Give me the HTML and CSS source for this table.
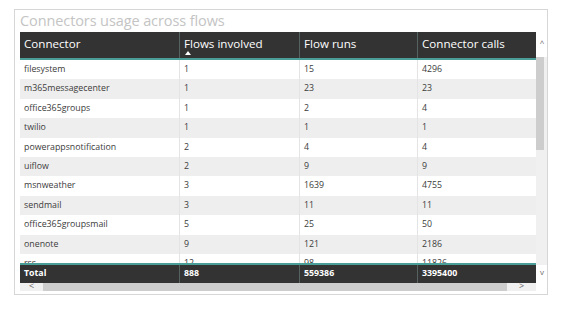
FILE: index.html
```html
<!DOCTYPE html>
<html>
<head>
<meta charset="utf-8">
<link rel="stylesheet" href="styles.css">
</head>
<body>
<div class="visual">
  <div class="title">Connectors usage across flows</div>
  <div class="frame">
    <div class="main">
      <div class="table">
        <div class="row head">
          <div class="cell">Connector</div>
          <div class="cell sorted">Flows involved<span class="sort"></span></div>
          <div class="cell">Flow runs</div>
          <div class="cell">Connector calls</div>
        </div>
        <div class="body">
          <div class="row"><div class="cell">filesystem</div><div class="cell">1</div><div class="cell">15</div><div class="cell">4296</div></div>
          <div class="row alt"><div class="cell">m365messagecenter</div><div class="cell">1</div><div class="cell">23</div><div class="cell">23</div></div>
          <div class="row"><div class="cell">office365groups</div><div class="cell">1</div><div class="cell">2</div><div class="cell">4</div></div>
          <div class="row alt"><div class="cell">twilio</div><div class="cell">1</div><div class="cell">1</div><div class="cell">1</div></div>
          <div class="row"><div class="cell">powerappsnotification</div><div class="cell">2</div><div class="cell">4</div><div class="cell">4</div></div>
          <div class="row alt"><div class="cell">uiflow</div><div class="cell">2</div><div class="cell">9</div><div class="cell">9</div></div>
          <div class="row"><div class="cell">msnweather</div><div class="cell">3</div><div class="cell">1639</div><div class="cell">4755</div></div>
          <div class="row alt"><div class="cell">sendmail</div><div class="cell">3</div><div class="cell">11</div><div class="cell">11</div></div>
          <div class="row"><div class="cell">office365groupsmail</div><div class="cell">5</div><div class="cell">25</div><div class="cell">50</div></div>
          <div class="row alt"><div class="cell">onenote</div><div class="cell">9</div><div class="cell">121</div><div class="cell">2186</div></div>
          <div class="row"><div class="cell">rss</div><div class="cell">12</div><div class="cell">98</div><div class="cell">11826</div></div>
        </div>
        <div class="row total">
          <div class="cell">Total</div>
          <div class="cell">888</div>
          <div class="cell">559386</div>
          <div class="cell">3395400</div>
        </div>
      </div>
      <div class="vscroll">
        <div class="arrow up">^</div>
        <div class="vtrack"><div class="vthumb"></div></div>
        <div class="arrow down">v</div>
      </div>
    </div>
    <div class="hscroll">
      <div class="harrow">&lt;</div>
      <div class="hthumb"></div>
      <div class="harrow right">&gt;</div>
      <div class="corner"></div>
    </div>
  </div>
</div>
</body>
</html>
```
FILE: styles.css
```css
* { box-sizing: border-box; }
html, body { margin: 0; padding: 0; background: #ffffff; }
body {
  font-family: "Open Sans", "Noto Sans", "Liberation Sans", sans-serif;
  width: 565px;
  height: 311px;
  padding: 9px 0 0 14px;
}
.visual {
  width: 534px;
  height: 286px;
  border: 1px solid #d6d6d6;
  padding: 0 0 0 5px;
  display: flex;
  flex-direction: column;
}
.title {
  height: 22px;
  line-height: 21px;
  font-size: 14.5px;
  color: #c4c4c4;
  letter-spacing: -0.1px;
  white-space: nowrap;
}
.frame {
  display: flex;
  flex-direction: column;
  width: 527px;
}
.main {
  display: flex;
}
.table {
  width: 516px;
  display: flex;
  flex-direction: column;
}
.row {
  display: grid;
  grid-template-columns: 159px 120px 118px 119px;
  height: 19.4px;
  background: #ffffff;
}
.row.alt { background: #eeeeee; }
.cell {
  padding-left: 4px;
  font-size: 8.8px;
  line-height: 19.4px;
  color: #3c3c3c;
  white-space: nowrap;
  overflow: hidden;
  border-left: 1px solid #e4e4e4;
}
.cell:first-child { border-left: none; padding-left: 4px; }
.head {
  height: 28px;
  background: #333333;
  border-bottom: 2px solid #4a9e98;
}
.head .cell {
  color: #ffffff;
  font-size: 11.6px;
  line-height: 16px;
  padding-top: 4px;
  border-left: 1px solid #56625f;
  position: relative;
}
.head .cell:first-child { border-left: none; }
.sort {
  position: absolute;
  left: 5px;
  top: 19px;
  width: 0;
  height: 0;
  border-left: 3.5px solid transparent;
  border-right: 3.5px solid transparent;
  border-bottom: 4px solid #ffffff;
}
.body {
  height: 203px;
  overflow: hidden;
}
.total {
  height: 20px;
  background: #333333;
  border-top: 2px solid #4a9e98;
}
.total .cell {
  color: #ffffff;
  font-weight: 700;
  font-size: 8.8px;
  line-height: 17px;
  border-left: 1px solid #56625f;
}
.total .cell:first-child { border-left: none; }
.vscroll {
  width: 11px;
  display: flex;
  flex-direction: column;
  align-items: stretch;
}
.arrow {
  height: 25px;
  font-size: 8px;
  color: #6a6a6a;
  text-align: center;
  line-height: 22px;
  padding-left: 1px;
}
.arrow.down {
  height: 18px;
  line-height: 14px;
  font-size: 8px;
  background: #ffffff;
}
.vtrack {
  flex: 1;
  background: #f0f0f0;
  padding-right: 3px;
}
.vthumb {
  height: 93px;
  background: #cdcdcd;
}
.hscroll {
  height: 8px;
  display: flex;
  align-items: stretch;
  background: #f0f0f0;
  margin-top: 0;
}
.harrow {
  width: 23px;
  font-size: 9px;
  line-height: 6px;
  color: #666666;
  text-align: center;
}
.harrow.right {
  width: 29px;
}
.hthumb {
  width: 464px;
  background: #cdcdcd;
}
.corner {
  flex: 1;
  background: #ffffff;
}
```
